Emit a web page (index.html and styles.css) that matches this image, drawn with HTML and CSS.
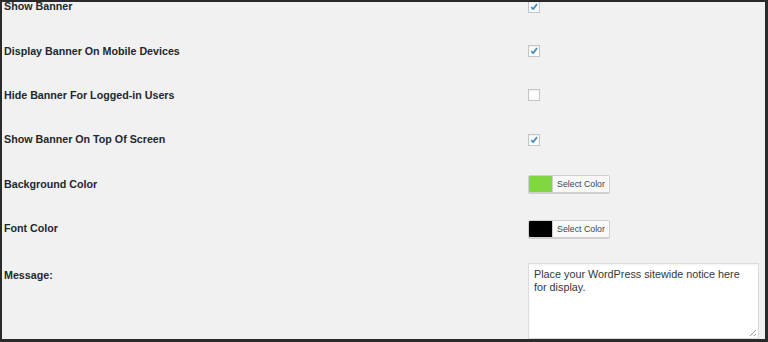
FILE: index.html
```html
<!DOCTYPE HTML>
<html>
	<head>
		<meta http-equiv="Content-Type" content="text/html; charset=UTF-8" />
		<title>Banner Settings</title>
		<link rel="stylesheet" href="styles.css">
	</head>
	<body>
		<div class="frame">
			<div class="form_table">
				<div class="row">
					<div class="label">Show Banner</div>
					<div class="field"><span class="check is-checked"><svg viewBox="0 0 12 12"><path d="M2.6 6.2 L5 8.6 L9.6 2.6" /></svg></span></div>
				</div>
				<div class="row">
					<div class="label">Display Banner On Mobile Devices</div>
					<div class="field"><span class="check is-checked"><svg viewBox="0 0 12 12"><path d="M2.6 6.2 L5 8.6 L9.6 2.6" /></svg></span></div>
				</div>
				<div class="row">
					<div class="label">Hide Banner For Logged-in Users</div>
					<div class="field"><span class="check"></span></div>
				</div>
				<div class="row">
					<div class="label">Show Banner On Top Of Screen</div>
					<div class="field"><span class="check is-checked"><svg viewBox="0 0 12 12"><path d="M2.6 6.2 L5 8.6 L9.6 2.6" /></svg></span></div>
				</div>
				<div class="row">
					<div class="label">Background Color</div>
					<div class="field">
						<div class="color_btn"><span class="swatch swatch--green"></span><span class="color_text">Select Color</span></div>
					</div>
				</div>
				<div class="row">
					<div class="label">Font Color</div>
					<div class="field">
						<div class="color_btn"><span class="swatch swatch--black"></span><span class="color_text">Select Color</span></div>
					</div>
				</div>
				<div class="row row--top">
					<div class="label">Message:</div>
					<div class="field">
						<div class="message">Place your WordPress sitewide notice here for display.<span class="grip"></span></div>
					</div>
				</div>
			</div>
		</div>
	</body>
</html>
```
FILE: styles.css
```css
html, body {
	margin: 0;
	padding: 0;
}
body {
	font-family: "Liberation Sans", Arial, sans-serif;
	color: #23282d;
}
.frame {
	box-sizing: border-box;
	width: 768px;
	height: 342px;
	overflow: hidden;
	background: #f1f1f1;
	border-top: 2px solid #2a2a2a;
	border-left: 2px solid #2a2a2a;
	border-right: 3px solid #2a2a2a;
	border-bottom: 3px solid #2a2a2a;
}
.form_table {
	margin-top: -17.5px;
}
.row {
	display: flex;
	align-items: center;
	height: 44.4px;
}
.row--top {
	align-items: flex-start;
	padding-top: 12.5px;
}
.label {
	width: 524px;
	padding-left: 2px;
	font-size: 10.7px;
	font-weight: bold;
	line-height: 13px;
}
.row--top .label {
	padding-top: 5.5px;
}
.field {
	display: flex;
}
.check {
	box-sizing: border-box;
	display: block;
	width: 12px;
	height: 12px;
	background: #fff;
	border: 1px solid #c3c6c9;
	box-shadow: inset 0 1px 2px rgba(0,0,0,.08);
}
.check svg {
	display: block;
	width: 10px;
	height: 10px;
}
.check path {
	fill: none;
	stroke: #4a8fcb;
	stroke-width: 2.2;
	stroke-linejoin: round;
}
.color_btn {
	display: flex;
	height: 18px;
	border: 1px solid #d0d0d0;
	border-radius: 2px;
	box-sizing: border-box;
	background: #f7f7f7;
	box-shadow: 0 1px 0 #cfcfcf;
	overflow: hidden;
}
.swatch {
	width: 23px;
	height: 100%;
}
.swatch--green {
	background: #81d742;
}
.swatch--black {
	background: #000;
}
.color_text {
	width: 56px;
	font-size: 8.8px;
	line-height: 16px;
	text-align: center;
	color: #444;
	border-left: 1px solid #d0d0d0;
	background: #f9f9f9;
}
.message {
	position: relative;
	box-sizing: border-box;
	width: 231px;
	height: 76px;
	padding: 4px 5px;
	background: #fff;
	border: 1px solid #dcdcdc;
	box-shadow: inset 0 1px 2px rgba(0,0,0,.05);
	font-size: 10.8px;
	line-height: 13px;
	color: #32373c;
}
.grip {
	position: absolute;
	right: 2px;
	bottom: 2px;
	width: 6px;
	height: 6px;
	background: linear-gradient(135deg, transparent 45%, #999 45%, #999 55%, transparent 55%, transparent 75%, #999 75%, #999 85%, transparent 85%);
}
```
